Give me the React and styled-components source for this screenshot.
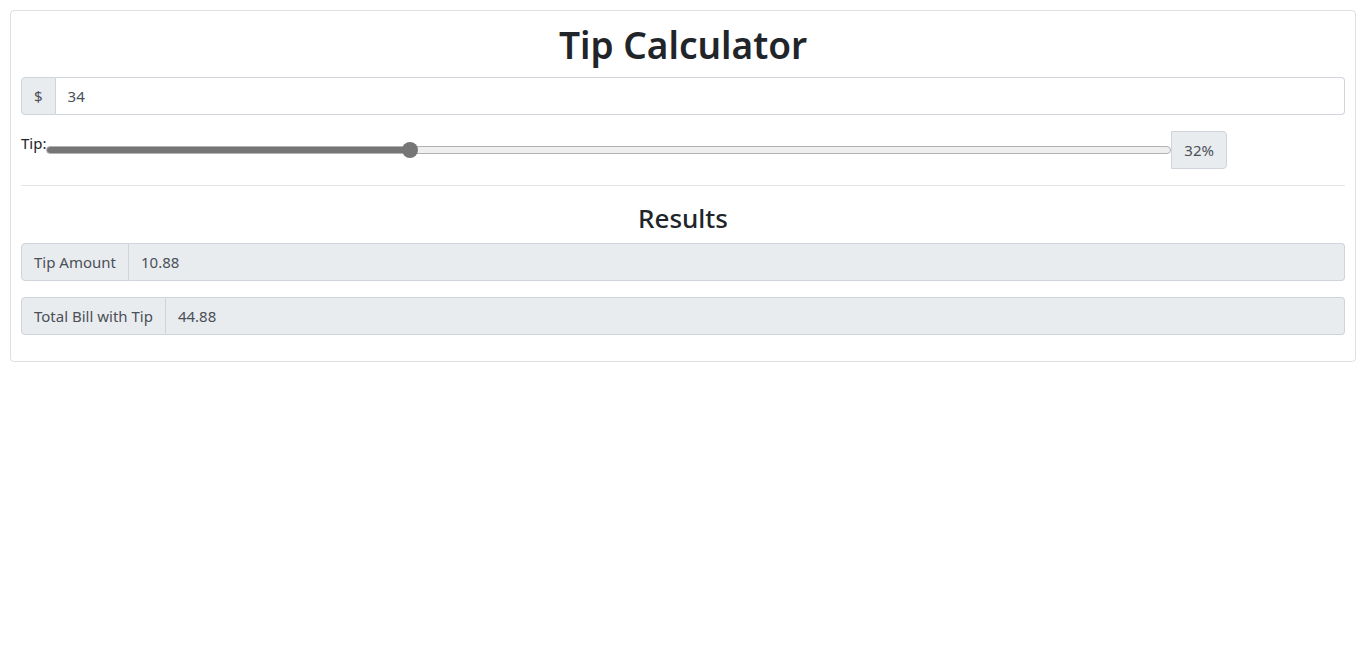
import React, { useState } from 'react';
import styled, { createGlobalStyle } from 'styled-components';

const GlobalStyle = createGlobalStyle`
    * { box-sizing: border-box; }
    body {
        margin: 0;
        background: #fff;
        color: #212529;
        font-family: "Noto Sans", "Open Sans", Roboto, sans-serif;
        font-size: 15px;
        line-height: 1.5;
    }
`;

const Page = styled.div`
    padding: 10px;
`;

const Card = styled.div`
    border: 1px solid rgba(0, 0, 0, 0.125);
    border-radius: 4px;
    padding: 10px;
`;

const Title = styled.h1`
    margin: 0 0 8px;
    text-align: center;
    font-size: 37px;
    font-weight: 600;
    line-height: 48px;
`;

const SubTitle = styled.h3`
    margin: 0 0 8px;
    text-align: center;
    font-size: 26px;
    font-weight: 500;
    line-height: 33px;
`;

const InputGroup = styled.div`
    display: flex;
    align-items: stretch;
    margin: 0 ${p => p.inset || 0}px 16px 0;
`;

const Addon = styled.span`
    display: flex;
    align-items: center;
    padding: 6px 12px;
    height: 38px;
    font-size: 15px;
    color: #495057;
    background: #e9ecef;
    border: 1px solid #ced4da;
    border-radius: ${p => (p.side === 'right' ? '0 4px 4px 0' : '4px 0 0 4px')};
    white-space: nowrap;
`;

const Field = styled.input`
    flex: 1;
    min-width: 0;
    height: 38px;
    padding: 6px 12px;
    font: inherit;
    font-size: 15px;
    color: #495057;
    background: ${p => (p.readOnly ? '#e9ecef' : '#fff')};
    border: 1px solid #ced4da;
    border-left: none;
    border-radius: 0 4px 4px 0;
    outline: none;
`;

const Label = styled.label`
    align-self: flex-start;
    margin-top: 1px;
    line-height: 22px;
`;

const Range = styled.input`
    flex: 1;
    align-self: center;
    margin: 0;
    height: 8px;
    appearance: none;
    -webkit-appearance: none;
    border: 1px solid #b2b2b2;
    border-radius: 4px;
    outline: none;

    &::-webkit-slider-thumb {
        -webkit-appearance: none;
        width: 16px;
        height: 16px;
        border-radius: 50%;
        background: #767676;
        border: none;
    }
`;

const Divider = styled.hr`
    margin: 16px 0;
    border: 0;
    border-top: 1px solid rgba(0, 0, 0, 0.1);
`;

const App = () => {
    const [bill, setBill] = useState('34');
    const [tip, setTip] = useState(32);

    const amount = parseFloat(bill) || 0;
    const tipAmount = (amount * tip) / 100;
    const total = amount + tipAmount;
    const fill = `calc(8px + (100% - 16px) * ${tip / 100})`;

    return (
        <Page>
            <GlobalStyle />
            <Card>
                <Title>Tip Calculator</Title>
                <InputGroup>
                    <Addon>$</Addon>
                    <Field value={bill} onChange={e => setBill(e.target.value)} />
                </InputGroup>
                <InputGroup inset={118}>
                    <Label htmlFor="tip">Tip:</Label>
                    <Range
                        id="tip"
                        type="range"
                        min="0"
                        max="100"
                        value={tip}
                        onChange={e => setTip(Number(e.target.value))}
                        style={{ background: `linear-gradient(to right, #767676 ${fill}, #efefef ${fill})` }}
                    />
                    <Addon side="right">{tip}%</Addon>
                </InputGroup>
                <Divider />
                <SubTitle>Results</SubTitle>
                <InputGroup>
                    <Addon>Tip Amount</Addon>
                    <Field readOnly value={tipAmount.toFixed(2)} />
                </InputGroup>
                <InputGroup>
                    <Addon>Total Bill with Tip</Addon>
                    <Field readOnly value={total.toFixed(2)} />
                </InputGroup>
            </Card>
        </Page>
    );
};

export default App;
